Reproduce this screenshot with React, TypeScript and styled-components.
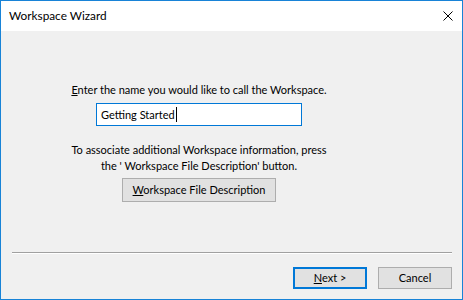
import React from 'react'
import styled, { createGlobalStyle } from 'styled-components'

const GlobalStyle = createGlobalStyle`
  html, body {
    margin: 0;
    padding: 0;
    background: #ffffff;
  }
  body {
    font-family: Lato, "Noto Sans", Arial, sans-serif;
    font-size: 11px;
    color: #000000;
  }
`

const App = () => {
  return (
    <>
      <GlobalStyle />
      <Window>
        <TitleBar>
          <Title>Workspace Wizard</Title>
          <CloseButton aria-label="Close">
            <svg width="10" height="10" viewBox="0 0 10 10">
              <path d="M0.5 0.5 L9.5 9.5 M9.5 0.5 L0.5 9.5" stroke="#000" strokeWidth="1" />
            </svg>
          </CloseButton>
        </TitleBar>
        <Body>
          <Content>
            <Prompt>
              <u>E</u>nter the name you would like to call the Workspace.
            </Prompt>
            <TextField>
              Getting Started<Caret />
            </TextField>
            <Note>
              To associate additional Workspace information, press
              <br />
              the ' Workspace File Description' button.
            </Note>
            <DescriptionButton width={154} height={24}>
              <u>W</u>orkspace File Description
            </DescriptionButton>
          </Content>
          <Footer>
            <Separator />
            <ButtonRow>
              <Button width={74} height={22} focused>
                <u>N</u>ext &gt;
              </Button>
              <Button width={74} height={22}>Cancel</Button>
            </ButtonRow>
          </Footer>
        </Body>
      </Window>
    </>
  )
}

export default App

const Window = styled.div`
  width: 463px;
  height: 300px;
  box-sizing: border-box;
  border: 1px solid #1883d7;
  display: flex;
  flex-direction: column;
  background: #f0f0f0;
`

const TitleBar = styled.div`
  height: 30px;
  background: #ffffff;
  display: flex;
  align-items: center;
  justify-content: space-between;
  padding: 0 9px 0 8px;
`

const Title = styled.div`
  font-size: 11.8px;
  line-height: 16px;
  margin-top: -1px;
`

const CloseButton = styled.div`
  width: 10px;
  height: 10px;
  display: flex;
  margin-top: -1px;
`

const Body = styled.div`
  flex: 1;
  display: flex;
  flex-direction: column;
`

const Content = styled.div`
  flex: 1;
  display: flex;
  flex-direction: column;
  align-items: center;
  padding: 51px 65px 0 0;
`

const Prompt = styled.div`
  line-height: 16px;
  text-align: center;
  white-space: nowrap;
`

const TextField = styled.div`
  width: 206px;
  height: 23px;
  box-sizing: border-box;
  margin-top: 5px;
  border: 1px solid #0078d7;
  background: #ffffff;
  display: flex;
  align-items: center;
  padding-left: 4px;
  line-height: 16px;
  white-space: nowrap;
`

const Caret = styled.span`
  display: inline-block;
  width: 1px;
  height: 15px;
  background: #000000;
  margin-left: 1px;
`

const Note = styled.div`
  margin-top: 16px;
  line-height: 16px;
  text-align: center;
  white-space: nowrap;
`

interface ButtonProps {
  width: number
  height: number
  focused?: boolean
}

const Button = styled.div<ButtonProps>`
  width: ${({ width }) => width}px;
  height: ${({ height }) => height}px;
  box-sizing: border-box;
  border: ${({ focused }) => (focused ? '2px solid #0078d7' : '1px solid #adadad')};
  background: #e1e1e1;
  text-align: center;
  line-height: ${({ height, focused }) => height - (focused ? 4 : 2)}px;
  white-space: nowrap;
`

const DescriptionButton = styled(Button)`
  margin-top: 4px;
`

const Footer = styled.div`
  padding: 0 10px 10px 11px;
`

const Separator = styled.div`
  height: 1px;
  background: #a0a0a0;
  border-bottom: 1px solid #ffffff;
`

const ButtonRow = styled.div`
  display: flex;
  justify-content: flex-end;
  gap: 11px;
  margin-top: 13px;
`
